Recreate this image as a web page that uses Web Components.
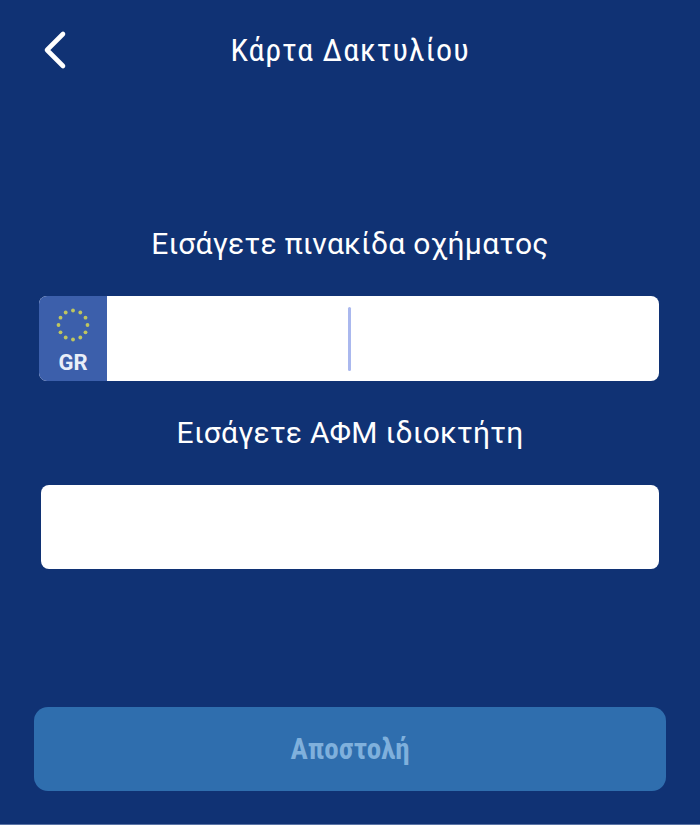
<!DOCTYPE html>
<html lang="el">
<head>
<meta charset="utf-8">
<title>Κάρτα Δακτυλίου</title>
<style>
html,body{margin:0;padding:0;height:100%;background:#103274;}
body{font-family:Roboto,"Noto Sans",sans-serif;}
</style>
</head>
<body>
<app-screen>
  <top-bar>Κάρτα Δακτυλίου</top-bar>
  <field-label slot="form" style="margin-top:123px">Εισάγετε πινακίδα οχήματος</field-label>
  <plate-input slot="form"></plate-input>
  <field-label slot="form" style="margin-top:31px">Εισάγετε ΑΦΜ ιδιοκτήτη</field-label>
  <text-box slot="form"></text-box>
  <submit-button slot="action">Αποστολή</submit-button>
</app-screen>
<script>
function def(name, html){
  customElements.define(name, class extends HTMLElement{
    constructor(){super();this.attachShadow({mode:'open'}).innerHTML=html;}
  });
}
def('app-screen',`<style>
:host{display:flex;flex-direction:column;height:825px;box-sizing:border-box;background:#103274;overflow:hidden;border-bottom:1px solid #5a74a6}
.form{display:flex;flex-direction:column;flex:1}
.action{padding:0 34px 33px}
</style>
<slot></slot>
<div class="form"><slot name="form"></slot></div>
<div class="action"><slot name="action"></slot></div>`);
def('top-bar',`<style>
:host{display:grid;grid-template-columns:1fr auto 1fr;align-items:center;height:100px;color:#fff;font:400 32px/1 Roboto,sans-serif;font-stretch:85%;letter-spacing:1px}
svg{display:block;margin-left:42px;width:26px;height:40px}
</style>
<svg viewBox="0 0 26 40" fill="none" stroke="#fff" stroke-width="4.6" stroke-linecap="round" stroke-linejoin="round"><path d="M21 4 L5 20 L21 36"/></svg>
<span><slot></slot></span><span></span>`);
def('field-label',`<style>
:host{display:block;text-align:center;color:#fff;font:400 30px/42px Roboto,sans-serif;letter-spacing:.27px}
</style><slot></slot>`);
def('plate-input',`<style>
:host{display:flex;height:85px;margin:31px 41px 0 39px;background:#fff;border-radius:8px;overflow:hidden}
.eu{width:68px;background:#3c5fab;display:flex;flex-direction:column;align-items:center;color:#e9eef8;font:700 22px/1 Roboto,sans-serif}
svg{width:36px;height:36px;margin-top:11px;display:block}
.gr{margin-top:9px}
.field{flex:1;display:flex;align-items:center;justify-content:flex-start;padding-left:241px}
.caret{width:3px;height:64px;border-radius:2px;background:#aab8ee}
</style>
<div class="eu"><svg viewBox="0 0 36 36" fill="#bfc65f">
<circle cx="18" cy="3.500" r="1.900"/><circle cx="25.300" cy="5.500" r="1.900"/><circle cx="30.500" cy="10.700" r="1.900"/><circle cx="32.500" cy="18" r="1.900"/><circle cx="30.500" cy="25.300" r="1.900"/><circle cx="25.300" cy="30.500" r="1.900"/><circle cx="18" cy="32.500" r="1.900"/><circle cx="10.700" cy="30.500" r="1.900"/><circle cx="5.500" cy="25.300" r="1.900"/><circle cx="3.500" cy="18" r="1.900"/><circle cx="5.500" cy="10.700" r="1.900"/><circle cx="10.700" cy="5.500" r="1.900"/>
</svg><span class="gr">GR</span></div>
<div class="field"><div class="caret"></div></div>`);
def('text-box',`<style>
:host{display:block;height:84px;margin:31px 41px 0 41px;background:#fff;border-radius:8px}
</style>`);
def('submit-button',`<style>
:host{display:flex;align-items:center;justify-content:center;height:84px;border-radius:14px;background:#2f6eae;color:#7fb0dc;font:700 29px/1 Roboto,sans-serif;font-stretch:75%}
</style><slot></slot>`);
</script>
</body>
</html>
